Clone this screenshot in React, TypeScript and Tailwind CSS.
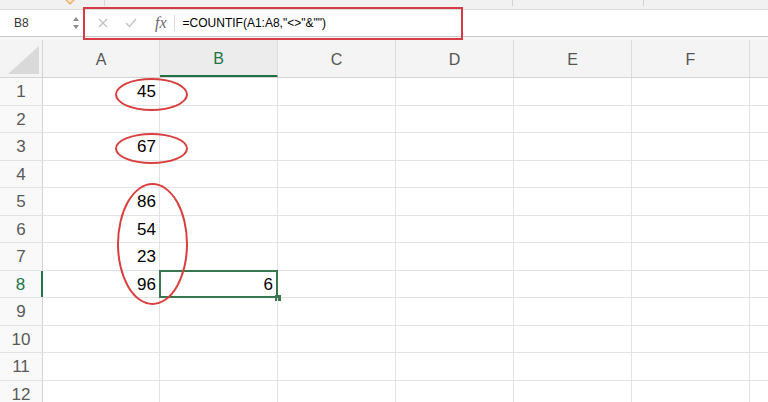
import React from "react";

const COLS = ["A", "B", "C", "D", "E", "F", "G"];
const WIDTHS = ["w-[117px]", "w-[118px]", "w-[118px]", "w-[118px]", "w-[118px]", "w-[118px]", "flex-1"];

const values: Record<number, string> = { 1: "45", 3: "67", 5: "86", 6: "54", 7: "23", 8: "96" };

function CornerTriangle() {
    return (
        <svg width="43" height="38" viewBox="0 0 43 38" className="block">
            <polygon points="39,6 39,34 8,34" fill="#d9d9d9" />
        </svg>
    );
}

function Spinner() {
    return (
        <svg width="8" height="16" viewBox="0 0 8 16" className="block">
            <polygon points="4,2 7,6 1,6" fill="#8a8a8a" />
            <polygon points="1,10 7,10 4,14" fill="#8a8a8a" />
        </svg>
    );
}

function Row({ n }: { n: number }) {
    const active = n === 8;
    return (
        <div className="flex h-[27.5px] border-b border-[#e3e3e3]">
            <div
                className={`w-[43px] shrink-0 flex items-center justify-center pt-[1px] bg-[#f9f9f9] border-r ${
                    active ? "border-r-2 border-[#217346] text-[#217346]" : "border-[#d4d4d4] text-[#5a5a5a]"
                } text-[17px]`}
            >
                {n}
            </div>
            {COLS.map((c, i) => {
                const isB8 = active && c === "B";
                return (
                    <div
                        key={c}
                        className={`${WIDTHS[i]} shrink-0 relative flex items-center justify-end pr-[3px] pt-[1px] text-[17px] text-black ${
                            i < COLS.length - 1 ? "border-r border-[#e3e3e3]" : ""
                        }`}
                    >
                        {c === "A" && values[n]}
                        {isB8 && (
                            <>
                                <div className="absolute inset-[-1px] border-2 border-[#3a7650] pointer-events-none" />
                                <div className="absolute right-[-4px] bottom-[-4px] w-[6px] h-[6px] bg-[#3a7650]" />
                                <span className="relative pr-[1px]">6</span>
                            </>
                        )}
                    </div>
                );
            })}
        </div>
    );
}

export default function App() {
    const rows = Array.from({ length: 12 }, (_, i) => i + 1);

    return (
        <div
            className="relative w-[768px] h-[402px] overflow-hidden bg-white"
            style={{ fontFamily: '"Liberation Sans", Arial, sans-serif' }}
        >
            {/* ribbon edge */}
            <div className="relative h-[10px] bg-[#f1f1f1] border-b border-[#dcdcdc]">
                <div className="absolute left-[66px] top-[-5px] w-[8px] h-[8px] rotate-45 border border-[#e8a050] bg-[#fbe3c4]" />
                <div className="absolute left-[104px] top-0 w-px h-[6px] bg-[#d6d6d6]" />
                <div className="absolute left-[512px] top-0 w-px h-[6px] bg-[#d0d0d0]" />
                <div className="absolute left-[643px] top-0 w-px h-[6px] bg-[#d0d0d0]" />
            </div>

            {/* formula bar */}
            <div className="flex h-[27px] items-center bg-white border-b border-[#c9c9c9]">
                <div className="w-[68px] pl-[14px] text-[12px] text-[#333]">B8</div>
                <div className="w-[16px] flex justify-center">
                    <Spinner />
                </div>
                <div className="w-[14px]" />
                <div className="flex items-center gap-[17px]">
                    <svg width="10" height="10" viewBox="0 0 10 10" className="block">
                        <path d="M1 1 L9 9 M9 1 L1 9" stroke="#c4c4c4" strokeWidth="1.4" />
                    </svg>
                    <svg width="12" height="10" viewBox="0 0 12 10" className="block">
                        <path d="M1 5 L4.5 8.5 L11 1" stroke="#c4c4c4" strokeWidth="1.4" fill="none" />
                    </svg>
                </div>
                <div
                    className="ml-[18px] text-[16px] italic text-[#6a6a6a]"
                    style={{ fontFamily: '"Liberation Serif", "Times New Roman", serif' }}
                >
                    fx
                </div>
                <div className="ml-[7px] w-px h-[16px] bg-[#dadada]" />
                <div className="ml-[8px] text-[12px] text-black">=COUNTIF(A1:A8,"&lt;&gt;"&amp;"")</div>
            </div>
            <div className="h-[3px] bg-[#f6f6f6]" />

            {/* column headers */}
            <div className="flex h-[38px] bg-[#f4f4f4] border-b border-[#d4d4d4]">
                <div className="w-[43px] shrink-0 border-r border-[#d4d4d4]">
                    <CornerTriangle />
                </div>
                {COLS.map((c, i) => (
                    <div
                        key={c}
                        className={`${WIDTHS[i]} shrink-0 flex items-center justify-center pt-[3px] text-[16px] ${
                            i < COLS.length - 1 ? "border-r border-[#dcdcdc]" : ""
                        } ${c === "B" ? "text-[#217346] border-b-2 border-b-[#217346] bg-[#ececec]" : "text-[#555]"}`}
                    >
                        {c === "G" ? "" : c}
                    </div>
                ))}
            </div>

            {/* grid */}
            <div>
                {rows.map((n) => (
                    <Row key={n} n={n} />
                ))}
            </div>

            {/* annotations */}
            <div className="absolute left-[83px] top-[7px] w-[380px] h-[33px] border-[2.5px] border-[#d63a45] pointer-events-none" />
            <div className="absolute left-[115px] top-[78px] w-[73px] h-[33px] rounded-[50%] border-2 border-[#d8403f] pointer-events-none" />
            <div className="absolute left-[115px] top-[133px] w-[73px] h-[31px] rounded-[50%] border-2 border-[#d8403f] pointer-events-none" />
            <div className="absolute left-[117px] top-[183px] w-[71px] h-[122px] rounded-[50%] border-2 border-[#d8403f] pointer-events-none" />
        </div>
    );
}
